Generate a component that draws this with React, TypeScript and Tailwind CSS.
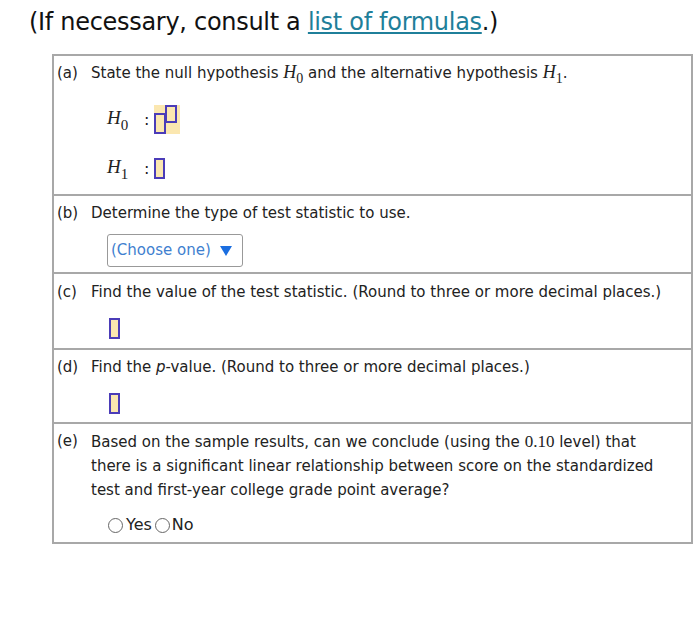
import React from 'react';

const sans = { fontFamily: '"DejaVu Sans", Verdana, sans-serif' };
const serif = { fontFamily: '"Liberation Serif", "Times New Roman", serif' };

function AnswerBox({ className = '' }: { className?: string }) {
  return <span className={`inline-block h-[21px] w-[11px] border-2 border-[#4b3cb8] bg-[#fbe7b0] align-top ${className}`} />;
}

// italic H with an upright subscript, kept from stretching the line box
function Hyp({ n, size = 'text' }: { n: string; size?: 'text' | 'big' }) {
  return (
    <span style={serif} className={`italic leading-none ${size === 'big' ? 'text-[19px]' : 'text-[18px]'}`}>
      H
      <span className={`relative not-italic ${size === 'big' ? 'top-[6px] text-[15px]' : 'top-[5px] text-[14px]'}`}>{n}</span>
    </span>
  );
}

function Section({ label, children, last, className = '' }: { label: string; children: React.ReactNode; last?: boolean; className?: string }) {
  return (
    <div className={`flex pl-[3px] ${last ? '' : 'border-b-2 border-[#a8a8a8]'} ${className}`}>
      <span className="w-[34px] shrink-0 leading-[22px]">{label}</span>
      <div className="flex-1">{children}</div>
    </div>
  );
}

export default function App() {
  return (
    <div className="h-[634px] w-[700px] bg-white text-[#222]" style={sans}>
      <div className="pl-[29px] pt-[6px] text-[24px] leading-[32px] tracking-[-0.3px] text-[#111]">
        (If necessary, consult a{' '}
        <span className="text-[#1f7f9a] underline underline-offset-2">list of formulas</span>.)
      </div>
      <div className="ml-[52px] mt-[16px] w-[641px] border-2 border-[#a8a8a8] text-[15px]">
        <Section label="(a)" className="pt-[6px]">
          <div className="leading-[22px]">
            State the null hypothesis <Hyp n="0" /> and the alternative hypothesis <Hyp n="1" />.
          </div>
          <div className="ml-[16px] mt-[21px] flex h-[29px] items-center">
            <span className="w-[37px]">
              <Hyp n="0" size="big" />
            </span>
            <span className="text-[16px]">:</span>
            <span className="relative ml-[5px] inline-block h-[29px] w-[26px] bg-[#fbe7b0]">
              <span className="absolute bottom-0 left-0 h-[21px] w-[12px] border-2 border-[#4b3cb8] bg-[#fbe7b0]" />
              <span className="absolute right-[3px] top-0 h-[18px] w-[12px] border-2 border-[#4b3cb8] bg-[#fbe7b0]" />
            </span>
          </div>
          <div className="ml-[16px] mt-[24px] flex h-[21px] items-center">
            <span className="w-[37px]">
              <Hyp n="1" size="big" />
            </span>
            <span className="text-[16px]">:</span>
            <AnswerBox className="ml-[5px]" />
          </div>
          <div className="h-[15px]" />
        </Section>
        <Section label="(b)" className="pt-[6px]">
          <div className="leading-[22px]">Determine the type of test statistic to use.</div>
          <div className="ml-[16px] mt-[10px] pb-[5px]">
            <div className="inline-flex h-[33px] w-[136px] items-center gap-[9px] rounded-[3px] border border-[#999] pl-[3px] text-[#3f7fcf]">
              <span>(Choose one)</span>
              <svg width="12" height="10" viewBox="0 0 12 10">
                <path d="M0 0 H12 L6 10 Z" fill="#1b6ee0" />
              </svg>
            </div>
          </div>
        </Section>
        <Section label="(c)" className="pt-[7px]">
          <div className="leading-[22px]">Find the value of the test statistic. (Round to three or more decimal places.)</div>
          <div className="flex pb-[9px] pt-[15px]">
            <AnswerBox className="ml-[18px]" />
          </div>
        </Section>
        <Section label="(d)" className="pt-[6px]">
          <div className="leading-[22px]">
            Find the <i>p</i>-value. (Round to three or more decimal places.)
          </div>
          <div className="flex pb-[8px] pt-[15px]">
            <AnswerBox className="ml-[18px]" />
          </div>
        </Section>
        <Section label="(e)" last className="pt-[6px]">
          <div className="leading-[24px]">
            Based on the sample results, can we conclude (using the{' '}
            <span style={serif} className="text-[17px] leading-none">0.10</span> level) that
            <br />
            there is a significant linear relationship between score on the standardized
            <br />
            test and first-year college grade point average?
          </div>
          <div className="ml-[17px] mt-[13px] flex h-[20px] items-center text-[16px]">
            <span className="inline-block h-[15px] w-[15px] rounded-full border border-[#666]" />
            <span className="ml-[3px] mr-[3px]">Yes</span>
            <span className="inline-block h-[15px] w-[15px] rounded-full border border-[#666]" />
            <span className="ml-[2px]">No</span>
          </div>
          <div className="h-[7px]" />
        </Section>
      </div>
    </div>
  );
}
